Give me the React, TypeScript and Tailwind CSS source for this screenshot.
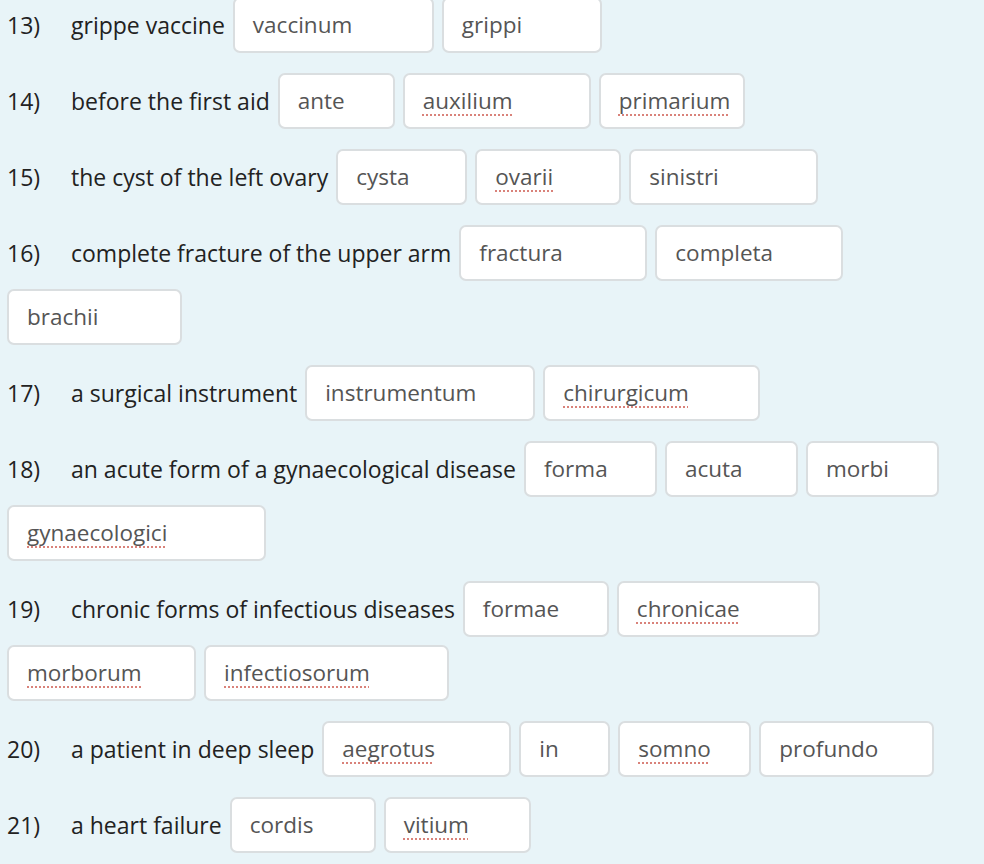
import React from 'react';

type Word = { text: string; width: number; flagged?: boolean };
type Item = { num: string; question: string; words: Word[] };

const items: Item[] = [
  {
    num: '13)',
    question: 'grippe vaccine',
    words: [
      { text: 'vaccinum', width: 201 },
      { text: 'grippi', width: 160 }
    ]
  },
  {
    num: '14)',
    question: 'before the first aid',
    words: [
      { text: 'ante', width: 117 },
      { text: 'auxilium', width: 188, flagged: true },
      { text: 'primarium', width: 146, flagged: true }
    ]
  },
  {
    num: '15)',
    question: 'the cyst of the left ovary',
    words: [
      { text: 'cysta', width: 131 },
      { text: 'ovarii', width: 146, flagged: true },
      { text: 'sinistri', width: 189 }
    ]
  },
  {
    num: '16)',
    question: 'complete fracture of the upper arm',
    words: [
      { text: 'fractura', width: 188 },
      { text: 'completa', width: 188 },
      { text: 'brachii', width: 175 }
    ]
  },
  {
    num: '17)',
    question: 'a surgical instrument',
    words: [
      { text: 'instrumentum', width: 230 },
      { text: 'chirurgicum', width: 217, flagged: true }
    ]
  },
  {
    num: '18)',
    question: 'an acute form of a gynaecological disease',
    words: [
      { text: 'forma', width: 133 },
      { text: 'acuta', width: 133 },
      { text: 'morbi', width: 133 },
      { text: 'gynaecologici', width: 259, flagged: true }
    ]
  },
  {
    num: '19)',
    question: 'chronic forms of infectious diseases',
    words: [
      { text: 'formae', width: 146 },
      { text: 'chronicae', width: 203, flagged: true },
      { text: 'morborum', width: 189, flagged: true },
      { text: 'infectiosorum', width: 245, flagged: true }
    ]
  },
  {
    num: '20)',
    question: 'a patient in deep sleep',
    words: [
      { text: 'aegrotus', width: 189, flagged: true },
      { text: 'in', width: 91 },
      { text: 'somno', width: 133, flagged: true },
      { text: 'profundo', width: 175 }
    ]
  },
  {
    num: '21)',
    question: 'a heart failure',
    words: [
      { text: 'cordis', width: 146 },
      { text: 'vitium', width: 147, flagged: true }
    ]
  }
];

const WordBox = ({ word }: { word: Word }) =>
  <div
    className="flex h-[56px] items-center rounded-[7px] border-2 border-[#dadee0] bg-white pl-[18px] text-[22.5px] text-[#555]"
    style={{ width: word.width }}>
    <span
      className={
        word.flagged
          ? 'underline decoration-dotted decoration-[#d9827a] decoration-2 underline-offset-[5px]'
          : ''
      }>
      {word.text}
    </span>
  </div>;

export default function App() {
  return (
    <div
      className="min-h-[864px] w-[984px] overflow-hidden bg-[#e8f4f8] text-[#222]"
      style={{ fontFamily: '"Open Sans", sans-serif' }}>
      <div className="-mt-[3px] flex flex-col gap-[20px]">
        {items.map((item) =>
          <div key={item.num} className="flex flex-wrap items-center gap-[8px] pl-[7px]">
            <span className="w-[56px] text-[23px]">{item.num}</span>
            <span className="text-[23px]">{item.question}</span>
            {item.words.map((w) => <WordBox key={w.text} word={w} />)}
          </div>
        )}
      </div>
    </div>);
}
